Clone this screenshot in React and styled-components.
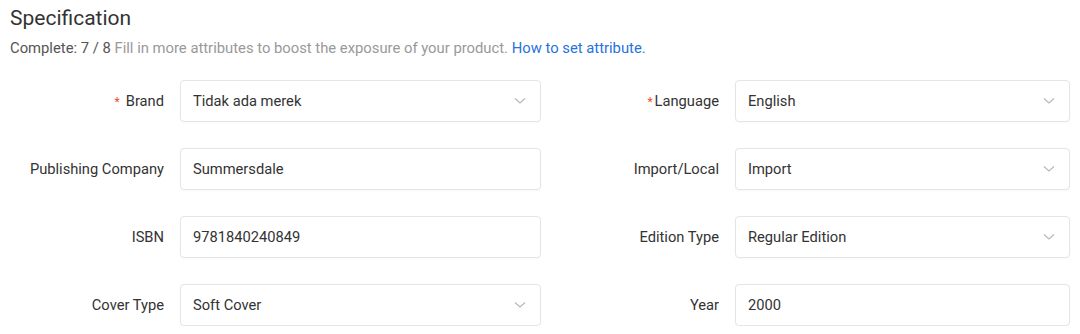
import React from "react";
import styled, { createGlobalStyle } from "styled-components";

const Global = createGlobalStyle`
  body {
    margin: 0;
    background: #fff;
    font-family: Roboto, "Helvetica Neue", Arial, sans-serif;
    color: #333;
  }
`;

const Section = styled.div`
  padding: 5px 10px 0 10px;
`;

const Title = styled.div`
  font-size: 21px;
  line-height: 26px;
  color: #333;
  font-weight: 400;
`;

const Hint = styled.div`
  margin-top: 8px;
  font-size: 14.8px;
  line-height: 18px;
  color: #999;
`;

const Done = styled.span`
  color: #555;
`;

const Link = styled.a`
  color: #2673dd;
  text-decoration: none;
`;

const Grid = styled.div`
  margin-top: 23px;
  margin-left: -10px;
  display: grid;
  grid-template-columns: 541px 510px;
  column-gap: 19px;
  row-gap: 26px;
`;

const Field = styled.div`
  display: flex;
  align-items: center;
  gap: 16px;
`;

const Label = styled.div`
  flex: 1;
  text-align: right;
  font-size: 14.7px;
  color: #333;
  white-space: nowrap;
`;

const Star = styled.span`
  color: #ee4d2d;
  font-size: 12px;
  margin-right: ${(p) => (p.$tight ? "2px" : "6px")};
`;

const Box = styled.div`
  width: ${(p) => p.$w}px;
  height: 42px;
  box-sizing: border-box;
  border: 1px solid #e5e5e5;
  border-radius: 4px;
  box-shadow: 0 1px 2px rgba(0, 0, 0, 0.03);
  display: flex;
  align-items: center;
  padding: 0 14px 0 12px;
  font-size: 14.7px;
  color: #333;
  background: #fff;
`;

const Value = styled.span`
  flex: 1;
`;

const Chevron = () => (
  <svg width="12" height="8" viewBox="0 0 12 8" fill="none">
    <path d="M1 1.5 L6 6 L11 1.5" stroke="#b7b7b7" strokeWidth="1.1" />
  </svg>
);

const Input = ({ w, value, select }) => (
  <Box $w={w}>
    <Value>{value}</Value>
    {select && <Chevron />}
  </Box>
);

const rows = [
  [
    { label: "Brand", req: true, value: "Tidak ada merek", select: true },
    { label: "Language", req: true, tight: true, value: "English", select: true },
  ],
  [
    { label: "Publishing Company", value: "Summersdale" },
    { label: "Import/Local", value: "Import", select: true },
  ],
  [
    { label: "ISBN", value: "9781840240849" },
    { label: "Edition Type", value: "Regular Edition", select: true },
  ],
  [
    { label: "Cover Type", value: "Soft Cover", select: true },
    { label: "Year", value: "2000" },
  ],
];

export default function App() {
  return (
    <>
      <Global />
      <Section>
        <Title>Specification</Title>
        <Hint>
          <Done>Complete: 7 / 8</Done> Fill in more attributes to boost the
          exposure of your product. <Link>How to set attribute.</Link>
        </Hint>
        <Grid>
          {rows.map((pair) =>
            pair.map((f, i) => (
              <Field key={f.label}>
                <Label>
                  {f.req && <Star $tight={f.tight}>*</Star>}
                  {f.label}
                </Label>
                <Input w={i === 0 ? 361 : 335} value={f.value} select={f.select} />
              </Field>
            ))
          )}
        </Grid>
      </Section>
    </>
  );
}
